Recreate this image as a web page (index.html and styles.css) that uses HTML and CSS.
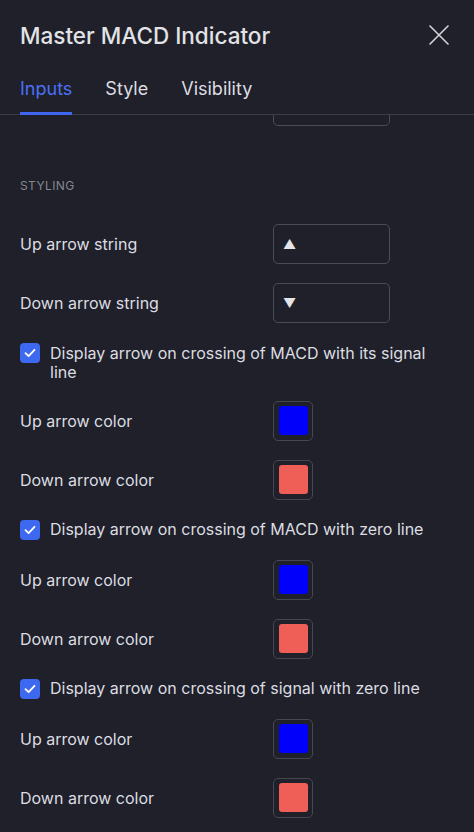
FILE: index.html
```html
<!DOCTYPE html>
<html lang="en">
<head>
    <meta charset="UTF-8">
    <meta name="viewport" content="width=device-width, initial-scale=1.0">
    <title>Master MACD Indicator</title>
    <link rel="stylesheet" href="styles.css">
</head>
<body>
    <div class="dialog">
        <header class="dialog-header">
            <h1 class="dialog-title">Master MACD Indicator</h1>
            <button class="close-btn" aria-label="Close">
                <svg width="20" height="20" viewBox="0 0 20 20">
                    <path d="M1 1 L19 19 M19 1 L1 19" stroke="#d4d5da" stroke-width="1.6" stroke-linecap="round" fill="none"/>
                </svg>
            </button>
        </header>

        <nav class="tabs">
            <span class="tab active">Inputs</span>
            <span class="tab">Style</span>
            <span class="tab">Visibility</span>
        </nav>

        <div class="panel">
            <div class="panel-scroll">
                <div class="row">
                    <span class="label"></span>
                    <div class="text-box"></div>
                </div>

                <div class="section-title">STYLING</div>

                <div class="row">
                    <span class="label">Up arrow string</span>
                    <div class="text-box">▲</div>
                </div>
                <div class="row">
                    <span class="label">Down arrow string</span>
                    <div class="text-box">▼</div>
                </div>

                <div class="check-row">
                    <span class="checkbox"><svg width="12" height="10" viewBox="0 0 12 10"><path d="M1.5 5.2 L4.6 8.2 L10.5 1.8" stroke="#fff" stroke-width="1.8" fill="none" stroke-linecap="round" stroke-linejoin="round"/></svg></span>
                    <span class="check-label">Display arrow on crossing of MACD with its signal line</span>
                </div>
                <div class="row">
                    <span class="label">Up arrow color</span>
                    <div class="swatch"><span class="swatch-fill blue"></span></div>
                </div>
                <div class="row">
                    <span class="label">Down arrow color</span>
                    <div class="swatch"><span class="swatch-fill red"></span></div>
                </div>

                <div class="check-row">
                    <span class="checkbox"><svg width="12" height="10" viewBox="0 0 12 10"><path d="M1.5 5.2 L4.6 8.2 L10.5 1.8" stroke="#fff" stroke-width="1.8" fill="none" stroke-linecap="round" stroke-linejoin="round"/></svg></span>
                    <span class="check-label">Display arrow on crossing of MACD with zero line</span>
                </div>
                <div class="row">
                    <span class="label">Up arrow color</span>
                    <div class="swatch"><span class="swatch-fill blue"></span></div>
                </div>
                <div class="row">
                    <span class="label">Down arrow color</span>
                    <div class="swatch"><span class="swatch-fill red"></span></div>
                </div>

                <div class="check-row">
                    <span class="checkbox"><svg width="12" height="10" viewBox="0 0 12 10"><path d="M1.5 5.2 L4.6 8.2 L10.5 1.8" stroke="#fff" stroke-width="1.8" fill="none" stroke-linecap="round" stroke-linejoin="round"/></svg></span>
                    <span class="check-label">Display arrow on crossing of signal with zero line</span>
                </div>
                <div class="row">
                    <span class="label">Up arrow color</span>
                    <div class="swatch"><span class="swatch-fill blue"></span></div>
                </div>
                <div class="row">
                    <span class="label">Down arrow color</span>
                    <div class="swatch"><span class="swatch-fill red"></span></div>
                </div>
            </div>
        </div>
    </div>
</body>
</html>
```

FILE: styles.css
```css
body {
    margin: 0;
    background-color: #1f2029;
    font-family: Inter, "Noto Sans", sans-serif;
    color: #dcdde2;
}
.dialog {
    width: 474px;
    height: 832px;
    overflow: hidden;
    display: flex;
    flex-direction: column;
}
.dialog-header {
    display: flex;
    align-items: center;
    justify-content: space-between;
    padding: 21px 25px 0 20px;
    height: 28px;
}
.dialog-title {
    margin: 0;
    font-size: 22.5px;
    font-weight: 500;
    color: #e2e3e7;
}
.close-btn {
    background: none;
    border: none;
    padding: 0;
    width: 20px;
    height: 20px;
    cursor: pointer;
}
.tabs {
    display: flex;
    gap: 33px;
    padding: 0 20px;
    margin-top: 29px;
    border-bottom: 1px solid #3a3c46;
}
.tab {
    font-size: 18px;
    line-height: 22px;
    padding-bottom: 12px;
    color: #dcdde2;
    border-bottom: 3px solid transparent;
    margin-bottom: -1px;
}
.tab.active {
    color: #4b70f5;
    border-bottom-color: #3f66f0;
}
.panel {
    flex: 1;
    overflow: hidden;
}
.panel-scroll {
    display: flex;
    flex-direction: column;
    gap: 19px;
    padding: 0 20px;
    margin-top: -29px;
}
.row {
    display: flex;
    align-items: center;
    height: 40px;
}
.label {
    width: 253px;
    font-size: 16px;
    color: #dcdde2;
}
.text-box {
    box-sizing: border-box;
    width: 117px;
    height: 40px;
    border: 1px solid #4a4d57;
    border-radius: 5px;
    display: flex;
    align-items: center;
    padding-left: 9px;
    font-size: 13px;
    color: #e4e5e9;
}
.section-title {
    font-size: 12px;
    line-height: 16px;
    letter-spacing: 0.4px;
    color: #858791;
    margin-top: 33px;
    margin-bottom: 11px;
}
.check-row {
    display: flex;
    align-items: flex-start;
    gap: 10px;
    min-height: 22px;
}
.checkbox {
    flex: none;
    width: 20px;
    height: 20px;
    margin-top: 1px;
    border-radius: 4px;
    background-color: #3d68f0;
    display: flex;
    align-items: center;
    justify-content: center;
}
.check-label {
    font-size: 16px;
    line-height: 19px;
    padding-top: 1.5px;
    color: #dcdde2;
}
.swatch {
    box-sizing: border-box;
    width: 40px;
    height: 40px;
    border: 1px solid #454751;
    border-radius: 5px;
    display: flex;
    align-items: center;
    justify-content: center;
}
.swatch-fill {
    width: 29px;
    height: 29px;
    border-radius: 3px;
}
.swatch-fill.blue {
    background-color: #0000fb;
}
.swatch-fill.red {
    background-color: #ef5f58;
}
```
